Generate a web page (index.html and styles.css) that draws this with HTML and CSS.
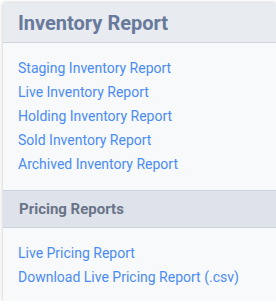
FILE: index.html
```html
<!DOCTYPE html>
<html>
<head>
<meta charset="utf-8">
<link rel="stylesheet" href="styles.css">
</head>
<body>
<div class="card">
  <div class="card-header">Inventory Report</div>
  <div class="links first">
    <a href="#">Staging Inventory Report</a>
    <a href="#">Live Inventory Report</a>
    <a href="#">Holding Inventory Report</a>
    <a href="#">Sold Inventory Report</a>
    <a href="#">Archived Inventory Report</a>
  </div>
  <div class="section-header">Pricing Reports</div>
  <div class="links last">
    <a href="#">Live Pricing Report</a>
    <a href="#">Download Live Pricing Report (.csv)</a>
  </div>
</div>
</body>
</html>
```
FILE: styles.css
```css
html, body {
  margin: 0;
  padding: 0;
  background: #ffffff;
  font-family: Roboto, "Liberation Sans", sans-serif;
}
body {
  padding: 3px 0 0 3px;
}
.card {
  background: #f8f9fb;
  box-shadow: 0 0 4px rgba(0,0,0,0.25);
}
.card-header {
  height: 40px;
  box-sizing: border-box;
  background: #e8ebef;
  border-bottom: 1px solid #cfd4db;
  padding: 0 15px;
  font-size: 20px;
  font-weight: 700;
  color: #687a9b;
  line-height: 40px;
}
.links {
  display: flex;
  flex-direction: column;
  align-items: flex-start;
  padding: 13px 15px 14px;
}
.links.last {
  padding: 13px 15px 12px;
}
.links a {
  font-size: 14px;
  line-height: 24px;
  color: #4a8cf5;
  text-decoration: none;
}
.section-header {
  height: 38px;
  box-sizing: border-box;
  background: #dee3eb;
  border-top: 1px solid #cdd3db;
  border-bottom: 1px solid #cdd3db;
  padding: 0 16px;
  font-size: 15px;
  font-weight: 700;
  color: #6a7488;
  line-height: 36px;
}
```
